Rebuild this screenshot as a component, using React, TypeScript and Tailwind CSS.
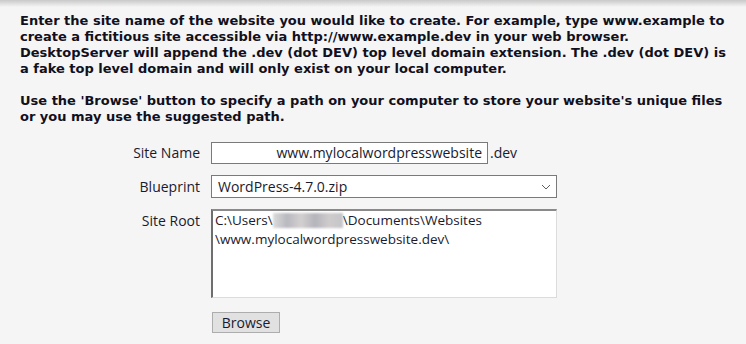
import React from "react";

const bold = { fontFamily: '"DejaVu Sans", Verdana, sans-serif' };
const ui = { fontFamily: '"Open Sans", "Noto Sans", sans-serif' };

function Field({
  label,
  top = false,
  className = "",
  children,
}: {
  label: string;
  top?: boolean;
  className?: string;
  children: React.ReactNode;
}) {
  return (
    <div className={`flex ${top ? "items-start" : "items-center"} ${className}`}>
      <div
        className={`w-[200px] text-right text-[14px] leading-[18px] text-[#1a1a2e] ${top ? "pt-[3px]" : ""}`}
        style={ui}
      >
        {label}
      </div>
      <div className="ml-[11px] flex items-center">{children}</div>
    </div>
  );
}

export default function App() {
  return (
    <div className="relative h-[344px] w-[746px] overflow-hidden bg-[#f5f5f5]">
      {/* soft shadow from the window chrome above */}
      <div className="pointer-events-none absolute inset-x-0 top-0 h-[7px] bg-gradient-to-b from-[#c9c9c9] to-[#f5f5f5]" />

      <div className="relative px-[20px] pt-[13px] text-[13px] font-bold leading-[16px] whitespace-nowrap text-[#101020]" style={bold}>
        <p>
          Enter the site name of the website you would like to create. For example, type www.example to
          <br />
          create a fictitious site accessible via http://www.example.dev in your web browser.
          <br />
          DesktopServer will append the .dev (dot DEV) top level domain extension. The .dev (dot DEV) is
          <br />
          a fake top level domain and will only exist on your local computer.
        </p>
        <p className="mt-[16px]">
          Use the 'Browse' button to specify a path on your computer to store your website's unique files
          <br />
          or you may use the suggested path.
        </p>
      </div>

      <div className="mt-[17px] flex flex-col">
        <Field label="Site Name" className="h-[22px]">
          <div
            className="h-[22px] w-[277px] border border-[#7a7a7a] bg-white pr-[5px] text-right text-[14px] leading-[20px] text-[#1a1a2e]"
            style={ui}
          >
            www.mylocalwordpresswebsite
          </div>
          <span className="ml-[2px] text-[14px] leading-[20px] text-[#1a1a2e]" style={ui}>
            .dev
          </span>
        </Field>

        <Field label="Blueprint" className="mt-[11px] h-[23px]">
          <div
            className="flex h-[23px] w-[346px] items-center justify-between border border-[#7a7a7a] bg-white pl-[6px] pr-[5px] text-[14px] text-[#1a1a2e]"
            style={ui}
          >
            <span>WordPress-4.7.0.zip</span>
            <svg width="10" height="6" viewBox="0 0 10 6" fill="none" stroke="#606060" strokeWidth="1">
              <path d="M1 1 L5 5 L9 1" />
            </svg>
          </div>
        </Field>

        <Field label="Site Root" top className="mt-[11px]">
          <div
            className="h-[89px] w-[346px] border-l-2 border-t-2 border-r border-b border-l-[#6e6e6e] border-t-[#8a8a8a] border-r-[#dcdcdc] border-b-[#dcdcdc] bg-white pl-[2px] text-[13.5px] leading-[18.5px] text-[#1a1a2e]"
            style={ui}
          >
            <p>
              C:\Users\
              <span className="inline-block h-[15px] w-[70px] align-[-3px] bg-[linear-gradient(90deg,#dcdcdc,#b8b8c0_20%,#d4d0d0_40%,#b4b4bc_60%,#d0cccc_80%,#c4c4c8)] blur-[0.8px]" />
              \Documents\Websites
            </p>
            <p>\www.mylocalwordpresswebsite.dev\</p>
          </div>
        </Field>

        <div className="ml-[212px] mt-[12px]">
          <button
            className="h-[21px] w-[68px] border border-[#adadad] bg-[#e1e1e1] text-[14px] leading-[19px] text-[#1a1a2e]"
            style={ui}
          >
            Browse
          </button>
        </div>
      </div>
    </div>
  );
}
